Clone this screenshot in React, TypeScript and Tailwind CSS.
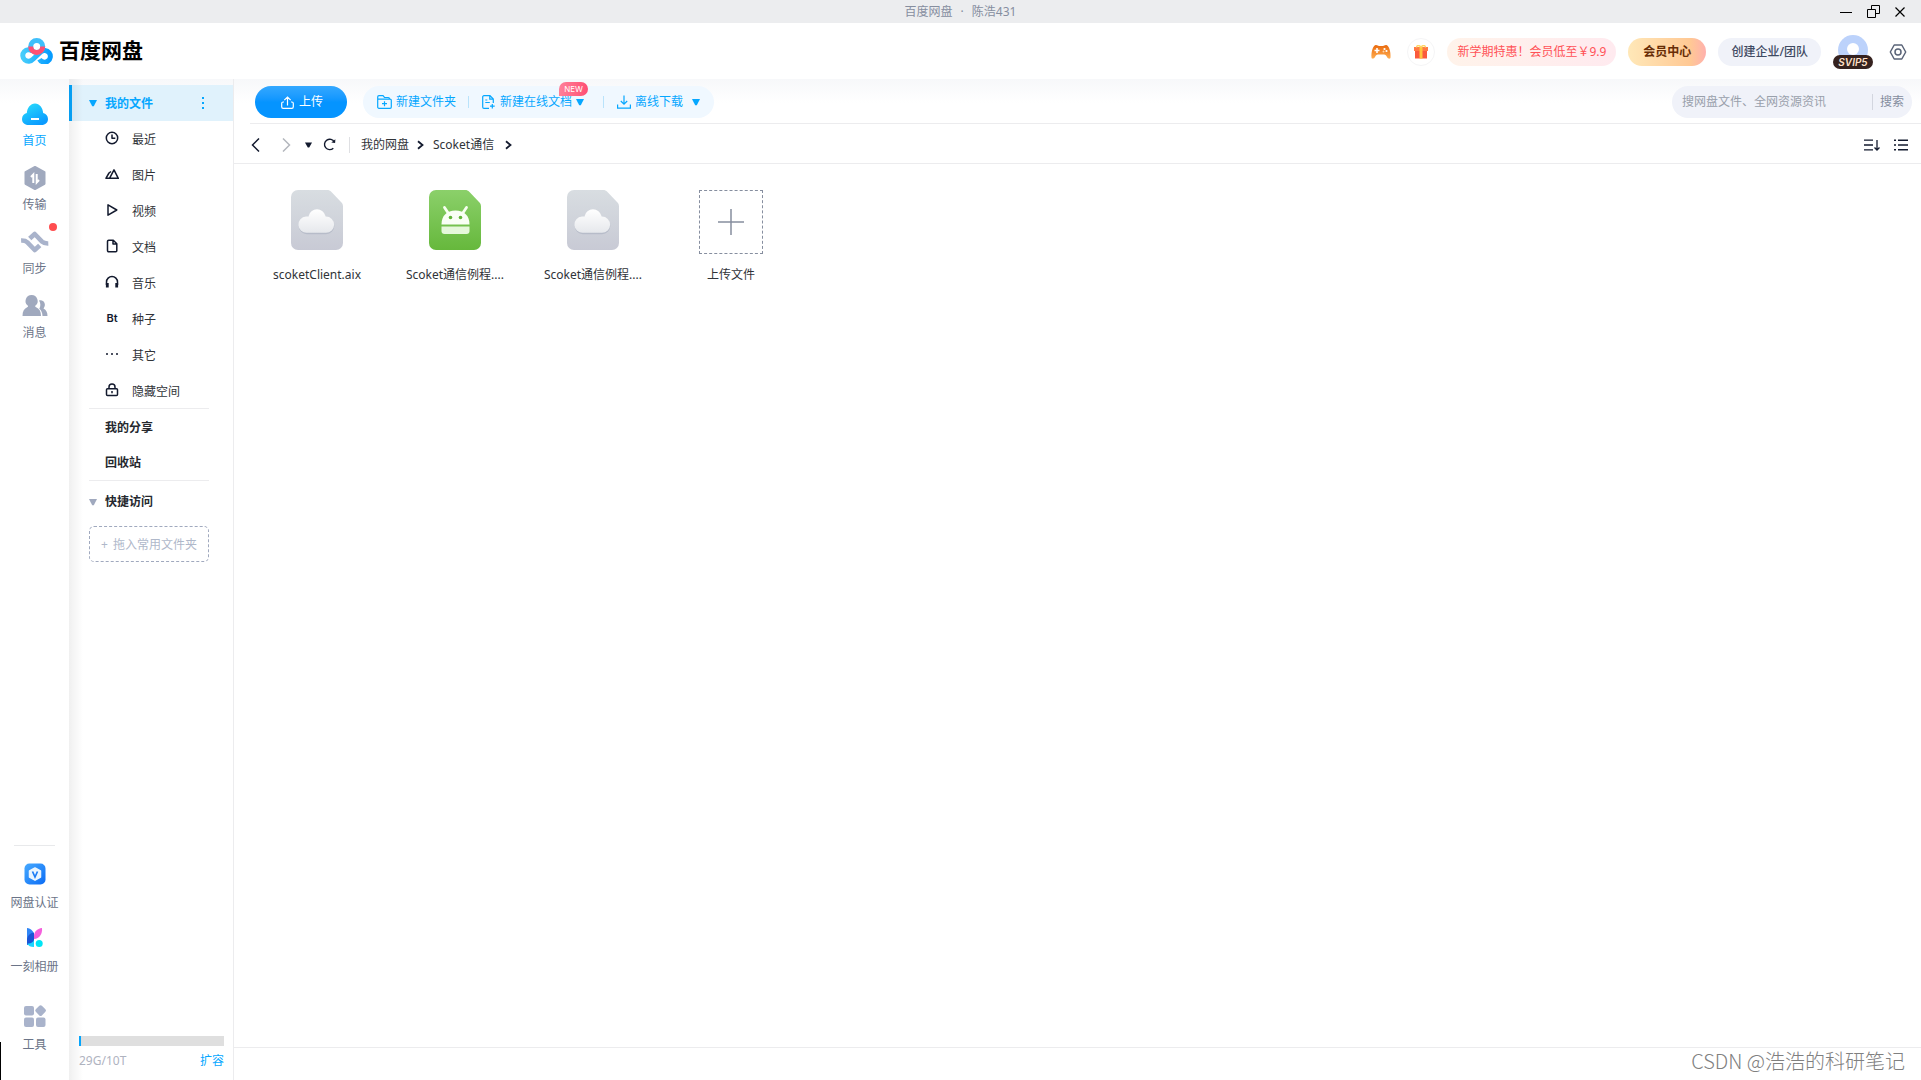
import type { ReactNode } from 'react';

const CloudHomeIcon = () => (
  <svg width="28" height="24" viewBox="0 0 28 24">
    <defs>
      <linearGradient id="home" x1="0" y1="0" x2="0.6" y2="1">
        <stop offset="0" stopColor="#2be0fb" />
        <stop offset="1" stopColor="#0a9bff" />
      </linearGradient>
    </defs>
    <path d="M7.500 23C3.500 23 1 20.500 1 17c0-3.200 2.200-5.300 4.800-5.900C6.200 5.800 9.500 1.500 14 1.500s7.800 4.300 8.200 9.600c2.600.6 4.800 2.700 4.800 5.900 0 3.500-2.500 6-6.500 6z" fill="url(#home)" />
    <rect x="10" y="16" width="8" height="2" fill="#fff" />
  </svg>
);

const TransferIcon = () => (
  <svg width="24" height="24" viewBox="0 0 24 24">
    <path d="M12 1l9.500 5.200v11.600L12 23l-9.500-5.200V6.200z" fill="#a0a9be" stroke="#a0a9be" strokeWidth="2" strokeLinejoin="round" />
    <path d="M10.300 17V8.500L8 11M13.700 8v8.500l2.300-2.500" fill="none" stroke="#fff" strokeWidth="2" />
  </svg>
);

const SyncIcon = () => (
  <svg width="28" height="24" viewBox="0 0 28 24" fill="none" stroke="#a9b3cb" strokeWidth="4.600" strokeLinejoin="round">
    <path d="M8.500 8.800L13.700 4l7.300 7.700c1.500 1.500 3.500 1.900 6.300 1.800" />
    <path d="M18.900 15.200L13.700 20l-7.300-7.700C4.900 10.800 2.900 10.400.1 10.500" />
    <path d="M5.800 6.200l5.500 5.500M16.100 12.300l5.500 5.500" stroke="#fff" strokeWidth="1" />
  </svg>
);

const MessageIcon = () => (
  <svg width="26" height="24" viewBox="0 0 26 24" fill="#a0a9be">
    <path d="M17 6.500c4-1.800 8.200 3.300 4.500 8 2.800 1.200 4 4 4 7.500h-5c-.2-3.500-1.200-5.500-3.200-7.200 1.500-2.500 1.500-5.500-.3-8.300z" />
    <path d="M9.500 1a6 6 0 0 1 4 10.600c-.5.500-.4 1.200.2 1.500 3.600 1.500 5.300 4.400 5.300 8.900H.5c0-4.500 1.700-7.400 5-8.900.7-.3.700-1 .2-1.500A6 6 0 0 1 9.500 1z" />
  </svg>
);

const CertIcon = () => (
  <svg width="22" height="22" viewBox="0 0 22 22">
    <defs>
      <linearGradient id="cert" x1="0" y1="0" x2="1" y2="1">
        <stop offset="0" stopColor="#47aaff" />
        <stop offset="1" stopColor="#0b6cf5" />
      </linearGradient>
    </defs>
    <rect x=".5" y=".5" width="21" height="21" rx="5" fill="url(#cert)" />
    <path d="M11 5l5.500 3v6L11 17.200 5.500 14V8z" fill="#e9f5ff" stroke="#e9f5ff" strokeWidth="1.500" strokeLinejoin="round" />
    <path d="M8.500 8.500L11 14l2.500-5.500" fill="none" stroke="#1d7df5" strokeWidth="1.700" />
  </svg>
);

const AlbumIcon = () => (
  <svg width="18" height="22" viewBox="0 0 18 22">
    <path d="M1 1c4 .5 7 3.500 7 8v6l-7 3z" fill="#2f86f6" />
    <path d="M16 1c.6 6-2.500 10.500-8 11V9c0-4 3-7.500 8-8z" fill="#f45fdc" />
    <path d="M8 5.500v8.500c-1 3-5 4-7 3.500V13c0-4 3-7 7-7.500z" fill="#1b55d6" />
    <path d="M8 13v7c-3.500 0-6-1-6.500-3.500C4.500 17 7 15.500 8 13z" fill="#1bd5ff" />
    <circle cx="13.200" cy="16.500" r="3.500" fill="#00e5f5" />
  </svg>
);

const ToolsIcon = () => (
  <svg width="24" height="24" viewBox="0 0 24 24" fill="#a9b3cb">
    <rect x="1" y="2" width="10" height="9.500" rx="2" />
    <rect x="1" y="13.500" width="10" height="9.500" rx="2" />
    <rect x="13" y="13.500" width="9.500" height="9.500" rx="2" />
    <rect x="13.300" y="2.300" width="8.600" height="8.600" rx="1.800" transform="rotate(45 17.600 6.600)" />
  </svg>
);

const Triangle = ({ className }: { className?: string }) => (
  <svg width="8" height="8" viewBox="0 0 8 8" className={className}>
    <path d="M0 1h8L4.800 7.200H3.200z" fill="currentColor" />
  </svg>
);

const LineIcon = ({ children }: { children: ReactNode }) => (
  <svg width="14" height="14" viewBox="0 0 14 14" fill="none" stroke="#131a2e" strokeWidth="1.500" strokeLinejoin="round">
    {children}
  </svg>
);

const categories = [
  { label: '最近', icon: <LineIcon><circle cx="7" cy="7" r="5.700" /><path d="M7 3.500V7.300h3.300" /></LineIcon> },
  { label: '图片', icon: <LineIcon><path d="M4.500 11.300L9 2.800l4.300 8.500zM4 11.300H.9L4 6l2-1.500" /></LineIcon> },
  { label: '视频', icon: <LineIcon><path d="M3 1.800v10.400L11.800 7z" /></LineIcon> },
  { label: '文档', icon: <LineIcon><path d="M3.700 1.200h4.600l3.500 3.500v7.100a1 1 0 0 1-1 1H3.700a1.200 1.200 0 0 1-1.200-1.200V2.400a1.200 1.200 0 0 1 1.200-1.200zM8 1.500V5h3.500" /></LineIcon> },
  { label: '音乐', icon: <LineIcon><path d="M1.500 10V7a5.500 5.500 0 0 1 11 0v3" /><path d="M2.300 8v4.500M11.700 8v4.500" strokeWidth="2.800" /></LineIcon> },
  { label: '种子', icon: <span className="font-[Inter] text-[11px] font-semibold leading-none text-[#131a2e]">Bt</span> },
  { label: '其它', icon: <LineIcon><path d="M1 7h2M6 7h2M11 7h2" strokeWidth="1.600" /></LineIcon> },
  { label: '隐藏空间', icon: <LineIcon><rect x="1.500" y="5.700" width="11" height="6.800" rx="1" /><path d="M4 5.500V4a3 3 0 0 1 6 0v1.500M7 8v2.300" /></LineIcon> },
];

type RailItemProps = { icon: ReactNode; label: string; active?: boolean; dot?: boolean };

const RailItem = ({ icon, label, active, dot }: RailItemProps) => (
  <a href="#" className={`relative flex h-16 flex-col items-center ${active ? 'text-[#06a7ff]' : 'text-[#6b7488]'}`}>
    <span className="flex h-6 items-center">{icon}</span>
    <span className="pt-[5px] leading-5">{label}</span>
    {dot && <span className="absolute -top-[7px] right-3 size-2 rounded-full bg-[#ff4d4f]" />}
  </a>
);

const CloudFile = () => (
  <svg width="52" height="60" viewBox="0 0 52 60">
    <defs>
      <linearGradient id="file" x1="0" y1="0" x2="0" y2="1">
        <stop offset="0" stopColor="#d8dde1" />
        <stop offset="1" stopColor="#c8cad5" />
      </linearGradient>
      <linearGradient id="cloud" x1="0" y1="0" x2="0" y2="1">
        <stop offset="0" stopColor="#fff" />
        <stop offset="1" stopColor="#e6e8ec" />
      </linearGradient>
    </defs>
    <path d="M7 0h29c2 0 3 .5 4.500 2L50 12c1.500 1.500 2 2.500 2 4.500V53a7 7 0 0 1-7 7H7a7 7 0 0 1-7-7V7a7 7 0 0 1 7-7z" fill="url(#file)" />
    <path d="M16 44.200a8.300 8.300 0 0 1 0-16.600h1a8.700 8.700 0 0 1 17 0h1a8.300 8.300 0 0 1 0 16.600z" fill="#b7bcc9" />
    <path d="M16 42.800a8.100 8.100 0 0 1-1-16.200h2.500v-.5a8.700 8.700 0 0 1 17 0v.5H35a8.100 8.100 0 0 1 0 16.200z" fill="url(#cloud)" />
  </svg>
);

const AndroidFile = () => (
  <svg width="52" height="60" viewBox="0 0 52 60">
    <defs>
      <linearGradient id="apk" x1="0" y1="0" x2="0" y2="1">
        <stop offset="0" stopColor="#8bd06a" />
        <stop offset="1" stopColor="#66b83c" />
      </linearGradient>
    </defs>
    <path d="M7 0h29c2 0 3 .5 4.500 2L50 12c1.500 1.500 2 2.500 2 4.500V53a7 7 0 0 1-7 7H7a7 7 0 0 1-7-7V7a7 7 0 0 1 7-7z" fill="url(#apk)" />
    <path d="M15.500 17.500l4 6M37.500 17.500l-4 6" stroke="#f7fff0" strokeWidth="2.800" strokeLinecap="round" />
    <path d="M12.500 34.500c0-9 5.500-14 14-14s14 5 14 14z" fill="#f9fff5" />
    <path d="M12.500 36.500h28V41a3 3 0 0 1-3 3h-22a3 3 0 0 1-3-3z" fill="#e5f8da" />
    <circle cx="21.500" cy="27.500" r="1.800" fill="#62b43a" />
    <circle cx="31.500" cy="27.500" r="1.800" fill="#62b43a" />
  </svg>
);

const files = [
  { name: 'scoketClient.aix', icon: <CloudFile /> },
  { name: 'Scoket通信例程....', icon: <AndroidFile /> },
  { name: 'Scoket通信例程....', icon: <CloudFile /> },
];

const TitleBar = () => (
  <div className="grid h-[23px] grid-cols-[1fr_auto_1fr] items-center bg-[#ecedef] text-[#868e9f]">
    <span />
    <div className="flex gap-2">
      <span>百度网盘</span>
      <span>·</span>
      <span>陈浩431</span>
    </div>
    <div className="flex h-5 items-center justify-end gap-[15px] pr-4 text-black">
      <button aria-label="最小化">
        <svg width="12" height="14" viewBox="0 0 12 14"><path d="M0 7.500h12" stroke="currentColor" /></svg>
      </button>
      <button aria-label="还原">
        <svg width="13" height="13" viewBox="0 0 13 13" fill="none" stroke="currentColor">
          <path d="M.5 4.500h8v8h-8zM4.500 4.500v-4h8v8h-4" />
        </svg>
      </button>
      <button aria-label="关闭">
        <svg width="10" height="10" viewBox="0 0 10 10"><path d="M.5.5l9 9M9.500.5l-9 9" stroke="currentColor" strokeWidth="1.200" /></svg>
      </button>
    </div>
  </div>
);

const Header = () => (
  <header className="flex h-14 items-center justify-between pl-5 pr-3.5 pt-0.5">
    <div className="flex items-center gap-[5px] pb-0.5">
      <svg width="34" height="26" viewBox="0 0 34 26" fill="none" strokeWidth="5">
        <defs>
          <linearGradient id="logo" x1="0" y1="0" x2="1" y2="0">
            <stop offset="0" stopColor="#46cdfb" />
            <stop offset="1" stopColor="#069cff" />
          </linearGradient>
        </defs>
        <path d="M19.500 21.200a5.800 5.800 0 1 0 1.200-7.200L13 21.200a5.800 5.800 0 1 1-.5-8" stroke="url(#logo)" />
        <circle cx="16.700" cy="8.500" r="6" stroke="#3fbffb" />
        <path d="M10.700 8.500a6 6 0 0 0 12 0" stroke="#ff4f73" />
      </svg>
      <h1 className="pb-0.5 text-[21px] font-bold leading-7 text-black">百度网盘</h1>
    </div>
    <div className="flex items-center gap-3">
      <button aria-label="游戏" className="mr-1">
        <svg width="20" height="16" viewBox="0 0 20 16">
          <defs>
            <linearGradient id="pad" x1="0" y1="0" x2="0" y2="1">
              <stop offset="0" stopColor="#e9690c" />
              <stop offset="1" stopColor="#ffae52" />
            </linearGradient>
          </defs>
          <path d="M5 1c1.500 0 2 1 3 1h4c1 0 1.500-1 3-1 3 0 5 7 4.500 12.500-.2 1.800-2.500 1.500-3.500-.5-.7-1.500-1.500-2.500-3-2.500H7C5.500 10.500 4.700 11.500 4 13c-1 2-3.300 2.300-3.500.5C0 8 2 1 5 1z" fill="url(#pad)" />
          <path d="M6 4v5M3.500 6.500h5" stroke="#fff" strokeWidth="1.600" />
          <circle cx="13.500" cy="5" r="1.100" fill="#fff" />
          <circle cx="15.500" cy="7" r="1.100" fill="#fff" />
          <circle cx="12.500" cy="7.500" r="1" fill="#ffd6a8" />
        </svg>
      </button>
      <button aria-label="礼物" className="flex size-7 items-center justify-center rounded-full border border-[#f5f5f6]">
        <svg width="14" height="14" viewBox="0 0 14 14">
          <path d="M0 2h14v4H0z" fill="#ff7a45" />
          <path d="M1 6h12v7.500H1z" fill="#fa5a3c" />
          <path d="M5.500 2h3v11.500h-3z" fill="#ffc53d" />
          <path d="M7 2.500C6 0 2.500-.3 2.500 2.500M7 2.500c1-2.500 4.500-2.800 4.500 0" fill="none" stroke="#ffd666" strokeWidth="1.400" />
        </svg>
      </button>
      <a href="#" className="flex h-7 items-center rounded-full bg-linear-to-r from-[#fff3ea] to-[#ffeaef] px-2.5 text-[#ff5257]">
        新学期特惠！会员低至￥9.9
      </a>
      <button className="h-7 rounded-full bg-linear-to-r from-[#ffe8b8] via-[#ffc894] via-80% to-[#ffb0ac] px-[15px] font-bold text-[#682d06]">
        会员中心
      </button>
      <button className="h-7 rounded-full bg-[#f0f2f9] px-[13px] font-medium text-[#3f4a63]">创建企业/团队</button>
      <button aria-label="账户" className="relative flex h-[34px] w-10 justify-center">
        <svg width="30" height="30" viewBox="0 0 30 30">
          <circle cx="15" cy="15" r="15" fill="#bcd2fb" />
          <circle cx="15" cy="14" r="6" fill="#fff" />
          <path d="M6 26c2-5 16-5 18 0-4 5-14 5-18 0z" fill="#fff" />
        </svg>
        <span className="absolute bottom-0 left-0 flex h-3.5 w-10 items-center justify-center rounded-full bg-[#35221f] font-[Inter] text-[10px] font-semibold italic leading-none text-[#ffe0c8]">
          SVIP5
        </span>
      </button>
      <button aria-label="设置" className="ml-1">
        <svg width="18" height="18" viewBox="0 0 18 18" fill="none" stroke="#5a6478" strokeWidth="1.500" strokeLinejoin="round">
          <path d="M5.200 2h7.600l3.900 7-3.900 7H5.200L1.300 9z" />
          <circle cx="9" cy="9" r="3" />
        </svg>
      </button>
    </div>
  </header>
);

const Rail = () => (
  <nav className="flex w-[69px] shrink-0 flex-col pt-[23px]">
    <RailItem icon={<CloudHomeIcon />} label="首页" active />
    <RailItem icon={<TransferIcon />} label="传输" />
    <RailItem icon={<SyncIcon />} label="同步" dot />
    <RailItem icon={<MessageIcon />} label="消息" />
    <div className="mt-auto pb-3">
      <hr className="mx-3.5 mb-4 border-[#e8e9eb]" />
      <div className="mb-3.5 [&>a]:gap-0.5">
        <RailItem icon={<CertIcon />} label="网盘认证" />
        <RailItem icon={<AlbumIcon />} label="一刻相册" />
      </div>
      <div className="[&>a]:gap-0.5">
        <RailItem icon={<ToolsIcon />} label="工具" />
      </div>
    </div>
  </nav>
);

const Sidebar = () => (
  <aside className="relative flex w-[165px] shrink-0 flex-col border-r border-[#ececee] pt-1.5">
    <div className="flex h-9 items-center border-l-3 border-[#06a7ff] bg-[#e0f2fc] pl-[17px] pr-[26px] text-[#06a7ff]">
      <Triangle className="mr-2" />
      <a href="#" className="flex-1 pt-0.5 font-bold">我的文件</a>
      <button aria-label="更多">
        <svg width="8" height="12" viewBox="0 0 8 12" fill="currentColor">
          <rect x="3" width="2" height="2" />
          <rect x="3" y="5" width="2" height="2" />
          <rect x="3" y="10" width="2" height="2" />
        </svg>
      </button>
    </div>
    {categories.map((item) => (
      <a key={item.label} href="#" className="flex h-9 items-center gap-[13px] pl-9 pt-0.5 text-[#303338]">
        <span className="flex w-3.5 justify-center pb-1">{item.icon}</span>
        {item.label}
      </a>
    ))}
    <div className="ml-5 mr-6 -mt-px flex h-[73px] flex-col border-y border-[#ececee] font-bold text-[#25282e]">
      <a href="#" className="flex flex-1 items-center pl-4 pt-0.5">我的分享</a>
      <a href="#" className="flex flex-1 items-center pl-4 pt-0.5">回收站</a>
    </div>
    <div className="ml-5 mr-6">
      <div className="flex h-10 items-center pt-0.5 font-bold text-[#25282e]">
        <Triangle className="mr-2 text-[#a0a9be]" />
        快捷访问
      </div>
      <div className="mt-[5px] flex h-9 items-center justify-center gap-[5px] rounded-[5px] border border-dashed border-[#a0a9be] pt-0.5 text-[#afb8ca]">
        <span>+</span>
        <span>拖入常用文件夹</span>
      </div>
    </div>
    <div className="mt-auto pb-[9px] pl-2.5 pr-[9px]">
      <div className="h-2.5 bg-[#dfdfdf]">
        <div className="h-full w-0.5 bg-[#06a7ff]" />
      </div>
      <div className="mt-[5px] flex justify-between leading-5 text-[#afb3bf]">
        <span>29G/10T</span>
        <a href="#" className="text-[#06a7ff]">扩容</a>
      </div>
    </div>
    <div className="pointer-events-none absolute inset-y-0 left-0 w-3.5 bg-linear-to-r from-black/6 to-transparent" />
  </aside>
);

const Toolbar = () => (
  <div className="ml-4 flex h-[45px] items-center justify-between border-b border-[#ececee] pl-[5px] pr-[9px] pt-0.5">
    <div className="flex items-center gap-4 text-[#06a7ff]">
      <button className="flex h-8 w-[92px] items-center justify-center gap-[5px] rounded-full bg-linear-to-b from-[#33a8ff] to-[#0594ff] to-50% pl-0.5 text-white">
        <svg width="13" height="13" viewBox="0 0 13 13" fill="none" stroke="currentColor" strokeWidth="1.200">
          <path d="M6.500 9.500V1.200M3.300 4.200l3.200-3.200 3.200 3.200M3 6H2.100C1.200 6 .7 6.500.7 7.400v3.300c0 .9.500 1.600 1.400 1.600h8.800c.9 0 1.400-.7 1.400-1.600V7.400c0-.9-.5-1.400-1.400-1.400H10" />
        </svg>
        上传
      </button>
      <div className="flex h-8 items-center rounded-full bg-[#f0f8ff] px-3.5">
        <button className="flex items-center gap-1">
          <svg width="15" height="14" viewBox="0 0 15 14" fill="none" stroke="currentColor" strokeWidth="1.200">
            <path d="M.7 11.500V2c0-.7.500-1.300 1.300-1.300h4L7.500 2.500h3.800c.7 0 1.200.4 1.200 1.200M.7 4.200h12.400c.7 0 1.200.4 1.200 1.100v6.600c0 .8-.5 1.400-1.200 1.400H2C1.200 13.300.7 12.700.7 12zM7.500 6.200v5M5 8.700h5" />
          </svg>
          新建文件夹
        </button>
        <span className="ml-3 mr-[13px] h-3 w-px bg-[#b9e3fb]" />
        <button className="relative flex items-center gap-1">
          <svg width="14" height="14" viewBox="0 0 14 14" fill="none" stroke="currentColor" strokeWidth="1.200">
            <path d="M7 13.300H2c-.8 0-1.300-.5-1.300-1.300V2C.7 1.200 1.200.7 2 .7h6l3.300 3.300v4M7.800 1v3.200H11M3.300 5h2M3.300 7.500h4.500M10.300 9v4.500M8 11.200h4.700" />
          </svg>
          新建在线文档
          <Triangle />
          <span className="absolute -top-3 -right-1 flex h-3.5 w-[29px] items-center justify-center rounded-full rounded-bl-none bg-linear-to-r from-[#ff8099] to-[#ff4d73] font-[Inter] text-[8px] leading-none text-white">
            NEW
          </span>
        </button>
        <span className="ml-[19px] mr-[13px] h-3 w-px bg-[#b9e3fb]" />
        <button className="flex items-center gap-1">
          <svg width="14" height="14" viewBox="0 0 14 14" fill="none" stroke="currentColor" strokeWidth="1.200">
            <path d="M7 .5v8.500M3.800 6l3.200 3.200L10.200 6M.6 9.500v3.700h12.800V9.500" />
          </svg>
          离线下载
          <Triangle className="ml-[5px]" />
        </button>
      </div>
    </div>
    <div className="flex h-8 w-60 items-center rounded-full bg-[#f0f2f9] pl-2.5">
      <input
        type="text"
        aria-label="搜索"
        placeholder="搜网盘文件、全网资源资讯"
        className="min-w-0 flex-1 bg-transparent outline-none placeholder:text-[#99a0ab]"
      />
      <button className="flex items-center gap-[7px] pr-2 text-[#858d9e]">
        <span className="h-4 w-px bg-[#d3d6df]" />
        搜索
      </button>
    </div>
  </div>
);

const Crumb = () => (
  <svg width="7" height="10" viewBox="0 0 7 10" fill="none" stroke="#131a2e" strokeWidth="1.800">
    <path d="M1 1.200L5.500 5 1 8.800" />
  </svg>
);

const Breadcrumb = () => (
  <div className="flex h-10 items-center justify-between border-b border-[#ececee] pl-[17px] pr-[13px] pt-0.5">
    <div className="flex items-center text-[#303338]">
      <button aria-label="后退" className="mr-[22px]">
        <svg width="9" height="14" viewBox="0 0 9 14" fill="none" stroke="#131a2e" strokeWidth="1.500"><path d="M8 .5L1.500 7 8 13.500" /></svg>
      </button>
      <button aria-label="前进" className="mr-3.5">
        <svg width="9" height="14" viewBox="0 0 9 14" fill="none" stroke="#b4b7be" strokeWidth="1.500"><path d="M1 .5L7.500 7 1 13.500" /></svg>
      </button>
      <button aria-label="历史" className="mr-[11px] text-[#131a2e]">
        <svg width="7" height="6" viewBox="0 0 7 6"><path d="M0 .5h7L4.200 5.500H2.800z" fill="currentColor" /></svg>
      </button>
      <button aria-label="刷新" className="mr-[13px]">
        <svg width="13" height="13" viewBox="0 0 13 13" fill="none" stroke="#131a2e" strokeWidth="1.400">
          <path d="M10.300 10.200A5.200 5.200 0 1 1 11.300 4" />
          <path d="M8.300 4.500l3.800.6.300-3.800z" fill="#131a2e" stroke="none" />
        </svg>
      </button>
      <span className="mr-[11px] h-4 w-px bg-[#dfe0e3]" />
      <a href="#" className="mr-2">我的网盘</a>
      <Crumb />
      <a href="#" className="ml-[9px] mr-[11px]">Scoket通信</a>
      <Crumb />
    </div>
    <div className="flex items-center gap-3.5">
      <button aria-label="排序">
        <svg width="16" height="12" viewBox="0 0 16 12" fill="none" stroke="#131a2e" strokeWidth="1.300">
          <path d="M0 1.200h9M0 6h9M0 10.800h9M13 1v10M10.500 8.500L13 11l2.500-2.500" />
        </svg>
      </button>
      <button aria-label="列表">
        <svg width="14" height="12" viewBox="0 0 14 12" fill="none" stroke="#131a2e" strokeWidth="1.400">
          <path d="M0 1.200h2M4 1.200h10M0 6h2M4 6h10M0 10.800h2M4 10.800h10" />
        </svg>
      </button>
    </div>
  </div>
);

const FileGrid = () => (
  <div className="flex flex-1 flex-wrap content-start pl-3.5 pt-[26px] text-[#303338]">
    {files.map((file, i) => (
      <button key={i} className="flex w-[138px] flex-col items-center">
        <span className="h-[75px]">{file.icon}</span>
        <span className="leading-5">{file.name}</span>
      </button>
    ))}
    <button className="flex w-[138px] flex-col items-center">
      <span className="mb-[11px] flex size-16 items-center justify-center border border-dashed border-[#868e9f]">
        <svg width="26" height="26" viewBox="0 0 26 26"><path d="M13 0v26M0 13h26" stroke="#868e9f" strokeWidth="1.500" /></svg>
      </span>
      <span className="leading-5">上传文件</span>
    </button>
  </div>
);

const App = () => {
  return (
    <div className="relative flex min-h-screen flex-col bg-white font-['Noto_Sans','Noto_Sans_CJK_SC',sans-serif] text-xs">
      <TitleBar />
      <Header />
      <div className="flex flex-1 bg-linear-to-b from-[#f7f8fa] to-white to-[24px]">
        <Rail />
        <Sidebar />
        <main className="flex min-w-0 flex-1 flex-col">
          <Toolbar />
          <Breadcrumb />
          <FileGrid />
          <footer className="flex h-[33px] items-center justify-end border-t border-[#ececee] pb-1.5 pr-4 font-['Noto_Sans_CJK_SC',sans-serif] text-xl font-light leading-6 text-[#808080]">
            CSDN @浩浩的科研笔记
          </footer>
        </main>
      </div>
      <div className="absolute bottom-0 left-0 h-[38px] w-px bg-black" />
    </div>
  );
};

export default App;
